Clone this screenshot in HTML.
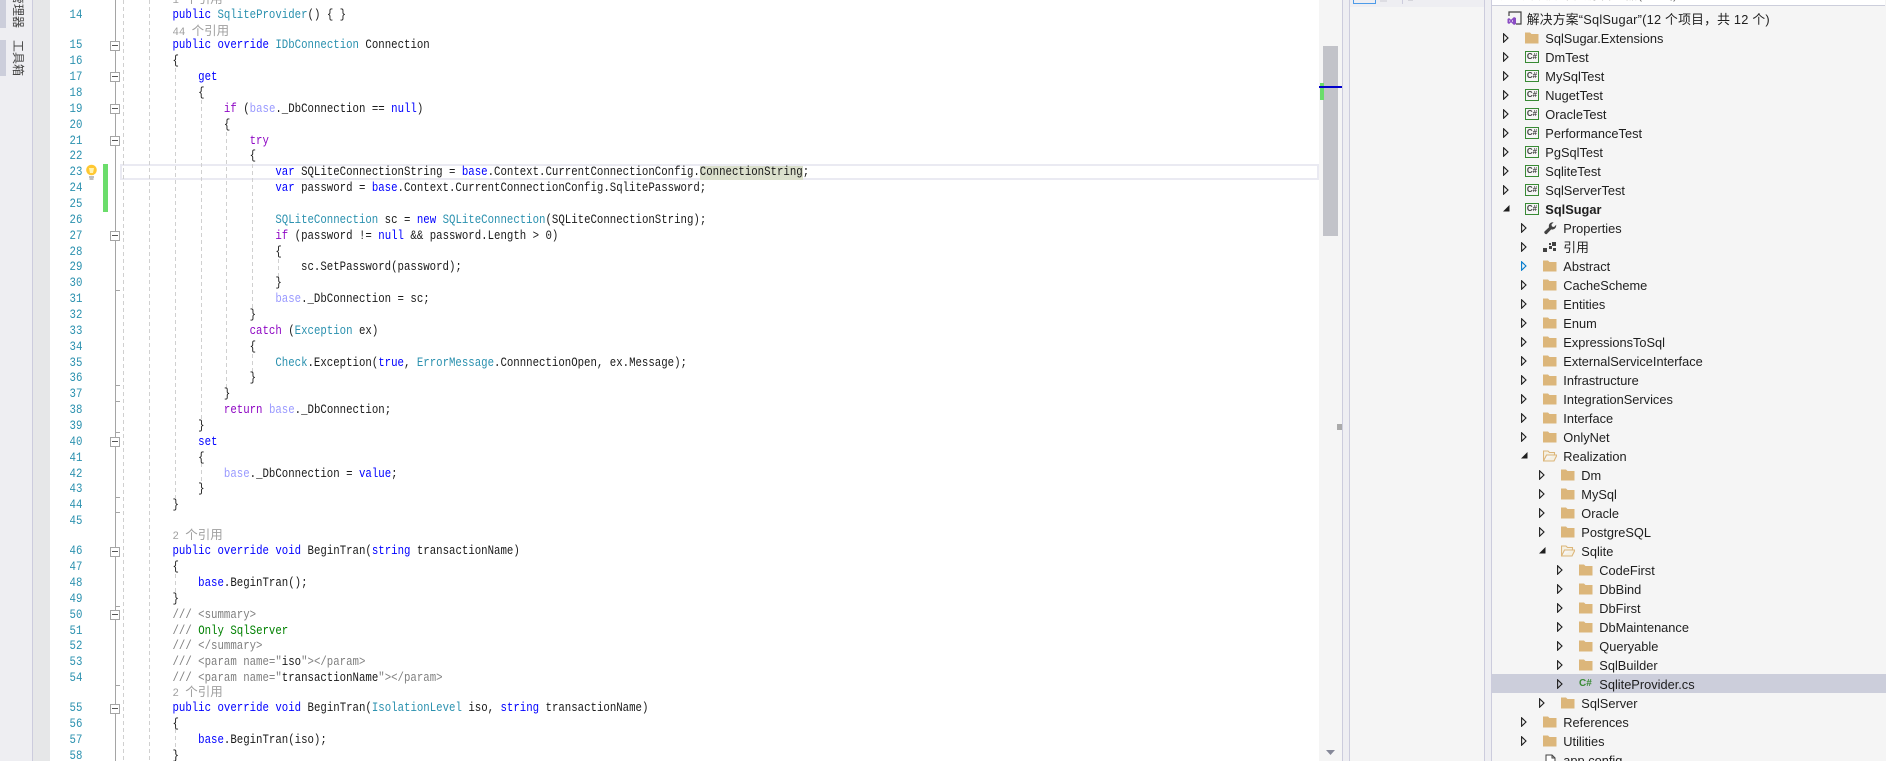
<!DOCTYPE html>
<html><head><meta charset="utf-8"><style>
html,body{margin:0;padding:0;width:1886px;height:761px;overflow:hidden;background:#fff}
#page{position:absolute;left:0;top:0;width:1886px;height:761px;overflow:hidden;background:#fff}
.a{position:absolute}
#code{position:absolute;left:121.3px;top:-6.1px;width:1600px;height:770px;transform:scaleX(.8573);transform-origin:0 0;font:12.5px/15.86px "Liberation Mono",monospace;color:#1a1a1a}
#code div{height:15.86px;position:relative;white-space:pre}
#code div.n{height:14.3px;line-height:14.3px;color:#a0a0a0}
#code div.n span{display:inline-block;position:relative;left:60px;top:-3px;line-height:14px;transform:scaleX(1.1664);transform-origin:0 0;font-family:"Liberation Mono","Noto Sans CJK SC",monospace;font-size:10.7px}
#code div.n em{font:normal 12.5px/14px "Noto Sans CJK SC",sans-serif}
#code i{position:absolute;left:-60px;top:0;font-style:normal;color:#2b91af}
.k{color:#00f}.t{color:#2b91af}.p{color:#8f08c4}.b{color:#9a9aff}.g{color:#808080}.c{color:#008000}
.bx{position:absolute;left:110px;width:8px;height:8px;border:1px solid #a5a5a5;background:#fff}
.bx:after{content:"";position:absolute;left:1px;top:3px;width:6px;height:1px;background:#555}
.tk{position:absolute;left:116px;width:4px;height:1px;background:#a5a5a5}
#tree{position:absolute;left:1492px;top:9.5px;width:394px;font:12.8px/19px "Liberation Sans","Noto Sans CJK SC",sans-serif;color:#1e1e1e}
.r{height:19px;position:relative;white-space:nowrap}
.r>span{position:absolute;top:0}
.r>svg{position:absolute}
.l0{--o:0px}.l1{--o:18px}.l2{--o:36px}.l3{--o:54px}
.r>span{left:calc(53.3px + var(--o))}
.x{left:calc(11px + var(--o));top:4.5px;width:6px;height:10px}
.d{left:calc(11px + var(--o));top:5.5px;width:7px;height:7px}
.f{left:calc(33px + var(--o));top:3px;width:14px;height:12px}
.cs{position:absolute;left:calc(33px + var(--o));top:3px;width:12px;height:10px;border:1px solid #388a34;font:bold 8px/10px "Liberation Sans",sans-serif;color:#424242;text-align:center}
</style></head><body><div id="page">
<svg width="0" height="0" style="position:absolute"><defs>
<symbol id="e" viewBox="0 0 6 10"><path d="M.6.8L5 5 .6 9.2Z" fill="none" stroke="#1e1e1e" stroke-width="1.1"/></symbol>
<symbol id="eb" viewBox="0 0 6 10"><path d="M.6.8L5 5 .6 9.2Z" fill="none" stroke="#007acc" stroke-width="1.1"/></symbol>
<symbol id="d" viewBox="0 0 7 7"><path d="M0 6.5H6.5V0Z" fill="#1e1e1e"/></symbol>
<symbol id="fo" viewBox="0 0 14 12"><path d="M0 .5H5L6.5 2H13.5V11.5H0Z" fill="#dcb67a"/></symbol>
<symbol id="op" viewBox="0 0 14 12"><path d="M.5 11V1H5L6.5 2.5H11.5V5H3.5L.5 11H11L14 5H11.5" fill="#f5f0e2" stroke="#dcb67a" stroke-width="1.1"/></symbol>
</defs></svg>

<div class="a" style="left:0;top:0;width:32px;height:761px;background:#eeeef2"></div>
<div class="a" style="left:0;top:0;width:6px;height:28px;background:#cccedb"></div>
<div class="a" style="left:0;top:40px;width:6px;height:36px;background:#cccedb"></div>
<div class="a" style="left:11px;top:-80px;height:108px;width:14px;writing-mode:vertical-rl;text-orientation:sideways;font:12px/14px 'Noto Sans CJK SC',sans-serif;color:#444;white-space:nowrap">解决方案资源管理器</div>
<div class="a" style="left:11px;top:40px;height:36px;width:14px;writing-mode:vertical-rl;text-orientation:sideways;font:12px/14px 'Noto Sans CJK SC',sans-serif;color:#444;white-space:nowrap">工具箱</div>
<div class="a" style="left:32px;top:0;width:1px;height:761px;background:#ccccdd"></div>
<div class="a" style="left:33px;top:0;width:17px;height:761px;background:#e6e7e8"></div>

<div class="a" style="left:120px;top:164px;width:1195px;height:12px;border:2px solid #eaeaf2"></div>
<div class="a" style="left:700px;top:166px;width:102.7px;height:14px;background:#dbe0cc"></div>

<svg class="a" style="left:0;top:0" width="400" height="761" fill="none" stroke="#d0d0d0" stroke-width="1" stroke-dasharray="4 3">
<path d="M123.5 0V761M149.5 0V761M175.5 68V498M201.5 100V420M226.5 132V388M252.5 164V310M252.5 354V372M278.5 259V277M201.5 463V483M175.5 574V592M175.5 722V761"/>
</svg>

<div class="a" style="left:115px;top:0;width:1.4px;height:761px;background:#a5a5a5"></div>
<div class="tk" style="top:290px"></div><div class="tk" style="top:385px"></div><div class="tk" style="top:401px"></div><div class="tk" style="top:432px"></div><div class="tk" style="top:497px"></div><div class="tk" style="top:512px"></div><div class="tk" style="top:606px"></div><div class="tk" style="top:685px"></div>
<div class="bx" style="top:41px"></div><div class="bx" style="top:72px"></div><div class="bx" style="top:104px"></div><div class="bx" style="top:136px"></div><div class="bx" style="top:231px"></div><div class="bx" style="top:437px"></div><div class="bx" style="top:547px"></div><div class="bx" style="top:610px"></div><div class="bx" style="top:704px"></div>

<div class="a" style="left:103px;top:164px;width:5px;height:48px;background:#6bdd6b"></div>
<svg class="a" style="left:85px;top:164px" width="13" height="17" viewBox="0 0 13 17">
<circle cx="6.5" cy="6" r="5.3" fill="#ffc832"/><path d="M4 4H9L8 9H5Z" fill="#fff3b0"/><path d="M4 13H9M4.5 15H8.5" stroke="#999" stroke-width="1.2"/></svg>

<div id="code">
<div class="n"><span>1 <em>个引用</em></span></div>
<div><i>14</i>        <span class="k">public</span> <span class="t">SqliteProvider</span>() { }</div>
<div class="n"><span style="top:-1px">44 <em>个引用</em></span></div>
<div><i>15</i>        <span class="k">public</span> <span class="k">override</span> <span class="t">IDbConnection</span> Connection</div>
<div><i>16</i>        {</div>
<div><i>17</i>            <span class="k">get</span></div>
<div><i>18</i>            {</div>
<div><i>19</i>                <span class="p">if</span> (<span class="b">base</span>._DbConnection == <span class="k">null</span>)</div>
<div><i>20</i>                {</div>
<div><i>21</i>                    <span class="p">try</span></div>
<div><i>22</i>                    {</div>
<div><i>23</i>                        <span class="k">var</span> SQLiteConnectionString = <span class="k">base</span>.Context.CurrentConnectionConfig.ConnectionString;</div>
<div><i>24</i>                        <span class="k">var</span> password = <span class="k">base</span>.Context.CurrentConnectionConfig.SqlitePassword;</div>
<div><i>25</i></div>
<div><i>26</i>                        <span class="t">SQLiteConnection</span> sc = <span class="k">new</span> <span class="t">SQLiteConnection</span>(SQLiteConnectionString);</div>
<div><i>27</i>                        <span class="p">if</span> (password != <span class="k">null</span> &amp;&amp; password.Length &gt; 0)</div>
<div><i>28</i>                        {</div>
<div><i>29</i>                            sc.SetPassword(password);</div>
<div><i>30</i>                        }</div>
<div><i>31</i>                        <span class="b">base</span>._DbConnection = sc;</div>
<div><i>32</i>                    }</div>
<div><i>33</i>                    <span class="p">catch</span> (<span class="t">Exception</span> ex)</div>
<div><i>34</i>                    {</div>
<div><i>35</i>                        <span class="t">Check</span>.Exception(<span class="k">true</span>, <span class="t">ErrorMessage</span>.ConnnectionOpen, ex.Message);</div>
<div><i>36</i>                    }</div>
<div><i>37</i>                }</div>
<div><i>38</i>                <span class="p">return</span> <span class="b">base</span>._DbConnection;</div>
<div><i>39</i>            }</div>
<div><i>40</i>            <span class="k">set</span></div>
<div><i>41</i>            {</div>
<div><i>42</i>                <span class="b">base</span>._DbConnection = <span class="k">value</span>;</div>
<div><i>43</i>            }</div>
<div><i>44</i>        }</div>
<div><i>45</i></div>
<div class="n"><span>2 <em>个引用</em></span></div>
<div><i>46</i>        <span class="k">public</span> <span class="k">override</span> <span class="k">void</span> BeginTran(<span class="k">string</span> transactionName)</div>
<div><i>47</i>        {</div>
<div><i>48</i>            <span class="k">base</span>.BeginTran();</div>
<div><i>49</i>        }</div>
<div><i>50</i>        <span class="g">/// &lt;summary&gt;</span></div>
<div><i>51</i>        <span class="g">///</span> <span class="c">Only SqlServer</span></div>
<div><i>52</i>        <span class="g">/// &lt;/summary&gt;</span></div>
<div><i>53</i>        <span class="g">/// &lt;param name="</span>iso<span class="g">"&gt;&lt;/param&gt;</span></div>
<div><i>54</i>        <span class="g">/// &lt;param name="</span>transactionName<span class="g">"&gt;&lt;/param&gt;</span></div>
<div class="n"><span>2 <em>个引用</em></span></div>
<div><i>55</i>        <span class="k">public</span> <span class="k">override</span> <span class="k">void</span> BeginTran(<span class="t">IsolationLevel</span> iso, <span class="k">string</span> transactionName)</div>
<div><i>56</i>        {</div>
<div><i>57</i>            <span class="k">base</span>.BeginTran(iso);</div>
<div><i>58</i>        }</div>
</div>

<!-- editor scrollbar -->
<div class="a" style="left:1319px;top:0;width:23px;height:761px;background:#f5f5f5"></div>
<div class="a" style="left:1323px;top:46px;width:15px;height:190px;background:#c2c3c9"></div>
<div class="a" style="left:1320px;top:83px;width:4px;height:17px;background:#6bdd6b"></div>
<div class="a" style="left:1319px;top:86px;width:23px;height:2px;background:#0000cc"></div>
<div class="a" style="left:1337px;top:424px;width:5px;height:6px;background:#aaa"></div>
<svg class="a" style="left:1326px;top:750px" width="9" height="5"><path d="M0 0H9L4.5 5Z" fill="#868999"/></svg>

<!-- gutters and middle panel -->
<div class="a" style="left:1342px;top:0;width:6px;height:761px;background:#eeeef2;border-left:1px solid #ccccdd;border-right:1px solid #ccccdd"></div>
<div class="a" style="left:1350px;top:0;width:134px;height:761px;background:#f5f5f5"></div>
<div class="a" style="left:1350px;top:0;width:134px;height:7px;background:#eeeef2"></div>
<div class="a" style="left:1353px;top:-1px;width:21px;height:3px;border:1px solid #4d9be8"></div>
<div class="a" style="left:1380px;top:0;width:7px;height:2px;background:#dddde3"></div>
<div class="a" style="left:1402px;top:0;width:1px;height:4px;background:#ccccdd"></div>
<div class="a" style="left:1408px;top:0;width:5px;height:1px;background:#d5d5db"></div>
<div class="a" style="left:1484px;top:0;width:6px;height:761px;background:#eeeef2;border-left:1px solid #ccccdd;border-right:1px solid #ccccdd"></div>

<!-- solution explorer -->
<div class="a" style="left:1492px;top:0;width:394px;height:761px;background:#f5f5f5"></div>
<div class="a" style="left:1492px;top:0;width:393px;height:5px;background:#fff;border-bottom:1px solid #cccedb;overflow:hidden"><div class="a" style="left:5px;top:-12px;font:12.8px/14px 'Liberation Sans','Noto Sans CJK SC',sans-serif;color:#717171;white-space:nowrap">搜索解决方案资源管理器(Ctrl+;)</div></div>
<div class="a" style="left:1492px;top:674px;width:394px;height:19px;background:#cccedb"></div>

<div id="tree">
<div class="r l0"><svg style="left:15px;top:1px" width="15" height="15" viewBox="0 0 15 15"><path d="M2 5V1H14V13H9" fill="none" stroke="#424242" stroke-width="1.2"/><path d="M.5 8L2 7 4 8.7 7 6 9 7V13L7 14 4 11.3 2 13 .5 12Z" fill="#8a4cc4"/><path d="M2.3 9V11L3.5 10ZM6 8.8L4.9 10 6 11.2Z" fill="#f5f5f5"/></svg><span style="left:34.7px;letter-spacing:.22px">解决方案“SqlSugar”(12 个项目，共 12 个)</span></div>
<div class="r l0"><svg class="x"><use href="#e"/></svg><svg class="f"><use href="#fo"/></svg><span>SqlSugar.Extensions</span></div>
<div class="r l0"><svg class="x"><use href="#e"/></svg><b class="cs">C#</b><span>DmTest</span></div>
<div class="r l0"><svg class="x"><use href="#e"/></svg><b class="cs">C#</b><span>MySqlTest</span></div>
<div class="r l0"><svg class="x"><use href="#e"/></svg><b class="cs">C#</b><span>NugetTest</span></div>
<div class="r l0"><svg class="x"><use href="#e"/></svg><b class="cs">C#</b><span>OracleTest</span></div>
<div class="r l0"><svg class="x"><use href="#e"/></svg><b class="cs">C#</b><span>PerformanceTest</span></div>
<div class="r l0"><svg class="x"><use href="#e"/></svg><b class="cs">C#</b><span>PgSqlTest</span></div>
<div class="r l0"><svg class="x"><use href="#e"/></svg><b class="cs">C#</b><span>SqliteTest</span></div>
<div class="r l0"><svg class="x"><use href="#e"/></svg><b class="cs">C#</b><span>SqlServerTest</span></div>
<div class="r l0"><svg class="d"><use href="#d"/></svg><b class="cs">C#</b><span style="font-weight:bold">SqlSugar</span></div>
<div class="r l1"><svg class="x"><use href="#e"/></svg><svg class="f" style="top:2px;height:14px" viewBox="0 0 14 14"><path d="M1.5 10.5L6 6.3C5.2 3.6 7.3 1 10.6 1.3L8.4 3.6 9 5.5 11 6 13.2 3.8C13.5 7 11 9.2 8.2 8.4L3.8 13C2.8 13.9.5 11.8 1.5 10.5Z" fill="#424242"/></svg><span>Properties</span></div>
<div class="r l1"><svg class="x"><use href="#e"/></svg><svg class="f" viewBox="0 0 14 12"><path d="M0 7H4V11H0ZM6 5H9V8H6ZM9 1H13V5H9ZM10 7H13V10H10ZM6 2H8V4H6Z" fill="#424242"/></svg><span>引用</span></div>
<div class="r l1"><svg class="x"><use href="#eb"/></svg><svg class="f"><use href="#fo"/></svg><span>Abstract</span></div>
<div class="r l1"><svg class="x"><use href="#e"/></svg><svg class="f"><use href="#fo"/></svg><span>CacheScheme</span></div>
<div class="r l1"><svg class="x"><use href="#e"/></svg><svg class="f"><use href="#fo"/></svg><span>Entities</span></div>
<div class="r l1"><svg class="x"><use href="#e"/></svg><svg class="f"><use href="#fo"/></svg><span>Enum</span></div>
<div class="r l1"><svg class="x"><use href="#e"/></svg><svg class="f"><use href="#fo"/></svg><span>ExpressionsToSql</span></div>
<div class="r l1"><svg class="x"><use href="#e"/></svg><svg class="f"><use href="#fo"/></svg><span>ExternalServiceInterface</span></div>
<div class="r l1"><svg class="x"><use href="#e"/></svg><svg class="f"><use href="#fo"/></svg><span>Infrastructure</span></div>
<div class="r l1"><svg class="x"><use href="#e"/></svg><svg class="f"><use href="#fo"/></svg><span>IntegrationServices</span></div>
<div class="r l1"><svg class="x"><use href="#e"/></svg><svg class="f"><use href="#fo"/></svg><span>Interface</span></div>
<div class="r l1"><svg class="x"><use href="#e"/></svg><svg class="f"><use href="#fo"/></svg><span>OnlyNet</span></div>
<div class="r l1"><svg class="d"><use href="#d"/></svg><svg class="f"><use href="#op"/></svg><span>Realization</span></div>
<div class="r l2"><svg class="x"><use href="#e"/></svg><svg class="f"><use href="#fo"/></svg><span>Dm</span></div>
<div class="r l2"><svg class="x"><use href="#e"/></svg><svg class="f"><use href="#fo"/></svg><span>MySql</span></div>
<div class="r l2"><svg class="x"><use href="#e"/></svg><svg class="f"><use href="#fo"/></svg><span>Oracle</span></div>
<div class="r l2"><svg class="x"><use href="#e"/></svg><svg class="f"><use href="#fo"/></svg><span>PostgreSQL</span></div>
<div class="r l2"><svg class="d"><use href="#d"/></svg><svg class="f"><use href="#op"/></svg><span>Sqlite</span></div>
<div class="r l3"><svg class="x"><use href="#e"/></svg><svg class="f"><use href="#fo"/></svg><span>CodeFirst</span></div>
<div class="r l3"><svg class="x"><use href="#e"/></svg><svg class="f"><use href="#fo"/></svg><span>DbBind</span></div>
<div class="r l3"><svg class="x"><use href="#e"/></svg><svg class="f"><use href="#fo"/></svg><span>DbFirst</span></div>
<div class="r l3"><svg class="x"><use href="#e"/></svg><svg class="f"><use href="#fo"/></svg><span>DbMaintenance</span></div>
<div class="r l3"><svg class="x"><use href="#e"/></svg><svg class="f"><use href="#fo"/></svg><span>Queryable</span></div>
<div class="r l3"><svg class="x"><use href="#e"/></svg><svg class="f"><use href="#fo"/></svg><span>SqlBuilder</span></div>
<div class="r l3"><svg class="x"><use href="#e"/></svg><b class="cs" style="border:0;color:#388a34;font-size:10px;top:4px">C#</b><span>SqliteProvider.cs</span></div>
<div class="r l2"><svg class="x"><use href="#e"/></svg><svg class="f"><use href="#fo"/></svg><span>SqlServer</span></div>
<div class="r l1"><svg class="x"><use href="#e"/></svg><svg class="f"><use href="#fo"/></svg><span>References</span></div>
<div class="r l1"><svg class="x"><use href="#e"/></svg><svg class="f"><use href="#fo"/></svg><span>Utilities</span></div>
<div class="r l1"><svg class="f" viewBox="0 0 14 12"><path d="M3 12V1H9L12 4V12M9 1V4H12" fill="#fff" stroke="#424242"/></svg><span>app.config</span></div>
</div>
</div></body></html>
